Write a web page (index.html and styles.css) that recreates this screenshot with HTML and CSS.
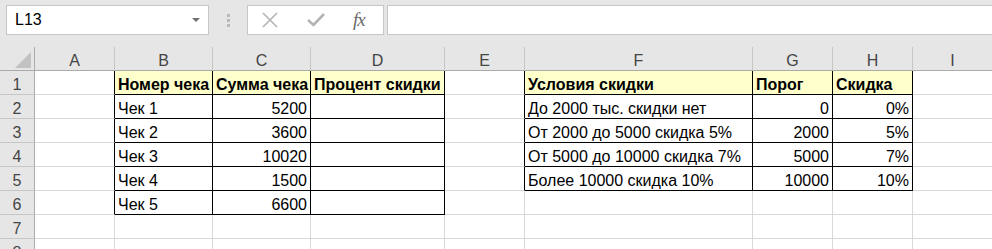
FILE: index.html
```html
<!DOCTYPE html>
<html lang="ru">
<head>
  <meta charset="UTF-8" />
  <title>Скидки</title>
  <link rel="stylesheet" href="styles.css">
</head>
<body>

  <div class="formula-bar">
    <div class="name-box">
      <span>L13</span>
      <svg class="drop" width="8" height="4" viewBox="0 0 8 4"><path d="M0 0h8L4 4z" fill="#707070"/></svg>
    </div>
    <div class="grip"><i></i><i></i><i></i></div>
    <div class="fx-box">
      <svg class="ico" width="16" height="16" viewBox="0 0 16 16"><path d="M1 1L15 15M15 1L1 15" stroke="#b4b4b4" stroke-width="1.6" fill="none"/></svg>
      <svg class="ico" width="18" height="14" viewBox="0 0 18 14"><path d="M1 7L6.5 12L17 1" stroke="#b4b4b4" stroke-width="2.6" fill="none"/></svg>
      <span class="fx">fx</span>
    </div>
    <div class="formula-input"></div>
  </div>

  <table class="sheet">
    <colgroup>
      <col style="width: 35px">
      <col style="width: 80px">
      <col style="width: 98px">
      <col style="width: 98px">
      <col style="width: 134px">
      <col style="width: 80px">
      <col style="width: 228px">
      <col style="width: 80px">
      <col style="width: 80px">
      <col style="width: 80px">
    </colgroup>
    <thead>
      <tr>
        <th class="corner"><svg width="16" height="16" viewBox="0 0 16 16"><path d="M16 0V16H0z" fill="#c2c2c2"/></svg></th>
        <th>A</th><th>B</th><th>C</th><th>D</th><th>E</th><th>F</th><th>G</th><th>H</th><th>I</th>
      </tr>
    </thead>
    <tbody>
      <tr>
        <th>1</th>
        <td class="edge"></td>
        <td class="box hd">Номер чека</td>
        <td class="box hd">Сумма чека</td>
        <td class="box hd">Процент скидки</td>
        <td class="edge"></td>
        <td class="box hd">Условия скидки</td>
        <td class="box hd">Порог</td>
        <td class="box hd">Скидка</td>
        <td></td>
      </tr>
      <tr>
        <th>2</th>
        <td class="edge"></td>
        <td class="box">Чек 1</td>
        <td class="box num">5200</td>
        <td class="box"></td>
        <td class="edge"></td>
        <td class="box">До 2000 тыс. скидки нет</td>
        <td class="box num">0</td>
        <td class="box num">0%</td>
        <td></td>
      </tr>
      <tr>
        <th>3</th>
        <td class="edge"></td>
        <td class="box">Чек 2</td>
        <td class="box num">3600</td>
        <td class="box"></td>
        <td class="edge"></td>
        <td class="box">От 2000 до 5000 скидка 5%</td>
        <td class="box num">2000</td>
        <td class="box num">5%</td>
        <td></td>
      </tr>
      <tr>
        <th>4</th>
        <td class="edge"></td>
        <td class="box">Чек 3</td>
        <td class="box num">10020</td>
        <td class="box"></td>
        <td class="edge"></td>
        <td class="box">От 5000 до 10000 скидка 7%</td>
        <td class="box num">5000</td>
        <td class="box num">7%</td>
        <td></td>
      </tr>
      <tr>
        <th>5</th>
        <td class="edge"></td>
        <td class="box">Чек 4</td>
        <td class="box num">1500</td>
        <td class="box"></td>
        <td class="edge"></td>
        <td class="box">Более 10000 скидка 10%</td>
        <td class="box num">10000</td>
        <td class="box num">10%</td>
        <td></td>
      </tr>
      <tr>
        <th>6</th>
        <td class="edge"></td>
        <td class="box">Чек 5</td>
        <td class="box num">6600</td>
        <td class="box"></td>
        <td></td><td></td><td></td><td></td><td></td>
      </tr>
      <tr>
        <th>7</th>
        <td></td><td></td><td></td><td></td><td></td><td></td><td></td><td></td><td></td>
      </tr>
      <tr>
        <th>8</th>
        <td></td><td></td><td></td><td></td><td></td><td></td><td></td><td></td><td></td>
      </tr>
    </tbody>
  </table>

</body>
</html>
```

FILE: styles.css
```css
/* Spreadsheet look: gray chrome, light gridlines */
:root {
  --chrome: #e6e6e6;
  --chrome-line: #c6c6c6;
  --header-line: #ababab;
  --grid: #d9d9d9;
  --fill: #ffffcc;
  --label: #444;
}

body {
  margin: 0;
  width: 992px;
  height: 249px;
  overflow: hidden;
  background: #fff;
  font-family: "Liberation Sans", Arial, sans-serif;
  font-size: 16px;
  color: #000;
}

.formula-bar {
  display: flex;
  align-items: flex-start;
  height: 47px;
  padding: 5px 0 0 6px;
  box-sizing: border-box;
  background: var(--chrome);
}

.name-box {
  width: 203px;
  height: 30px;
  box-sizing: border-box;
  border: 1px solid var(--chrome-line);
  background: #fff;
  display: flex;
  align-items: center;
  justify-content: space-between;
  padding: 0 8px 0 8px;
}

.grip {
  width: 38px;
  height: 30px;
  display: flex;
  flex-direction: column;
  align-items: center;
  justify-content: center;
  gap: 2px;
}

.grip i {
  width: 3px;
  height: 3px;
  background: #b9b9b9;
}

.fx-box {
  width: 137px;
  height: 30px;
  box-sizing: border-box;
  border: 1px solid var(--chrome-line);
  background: #fff;
  display: flex;
  align-items: center;
  padding-left: 14px;
  gap: 29px;
}

.fx-box .ico {
  display: block;
}

.fx {
  font-family: "Liberation Serif", "Times New Roman", serif;
  font-style: italic;
  font-size: 19px;
  color: #6a6a6a;
  margin-left: -1px;
  letter-spacing: -1px;
}

.formula-input {
  flex: 1;
  height: 30px;
  margin-left: 3px;
  box-sizing: border-box;
  border: 1px solid var(--chrome-line);
  border-right: none;
  background: #fff;
}

.sheet {
  table-layout: fixed;
  border-collapse: separate;
  border-spacing: 0;
  width: 993px;
}

.sheet th,
.sheet td {
  height: 24px;
  box-sizing: border-box;
  padding: 0 3px;
  line-height: 18px;
  vertical-align: bottom;
  white-space: nowrap;
  overflow: visible;
  border-right: 1px solid var(--grid);
  border-bottom: 1px solid var(--grid);
  text-align: left;
}

.sheet thead th {
  background: var(--chrome);
  color: var(--label);
  font-weight: normal;
  text-align: center;
  border-right-color: var(--chrome-line);
  border-bottom-color: var(--header-line);
}

.sheet tbody th {
  background: var(--chrome);
  color: var(--label);
  font-weight: normal;
  text-align: center;
  border-right-color: var(--header-line);
  border-bottom-color: var(--chrome-line);
}

.sheet th.corner {
  border-right-color: var(--header-line);
  padding: 0 3px 2px 0;
}

.corner svg {
  display: block;
  margin-left: auto;
}

.sheet td.edge {
  border-right-color: #000;
}

.sheet td.box {
  border-right-color: #000;
  border-bottom-color: #000;
}

.sheet td.hd {
  background: var(--fill);
  font-weight: bold;
}

.sheet td.num {
  text-align: right;
}
```
